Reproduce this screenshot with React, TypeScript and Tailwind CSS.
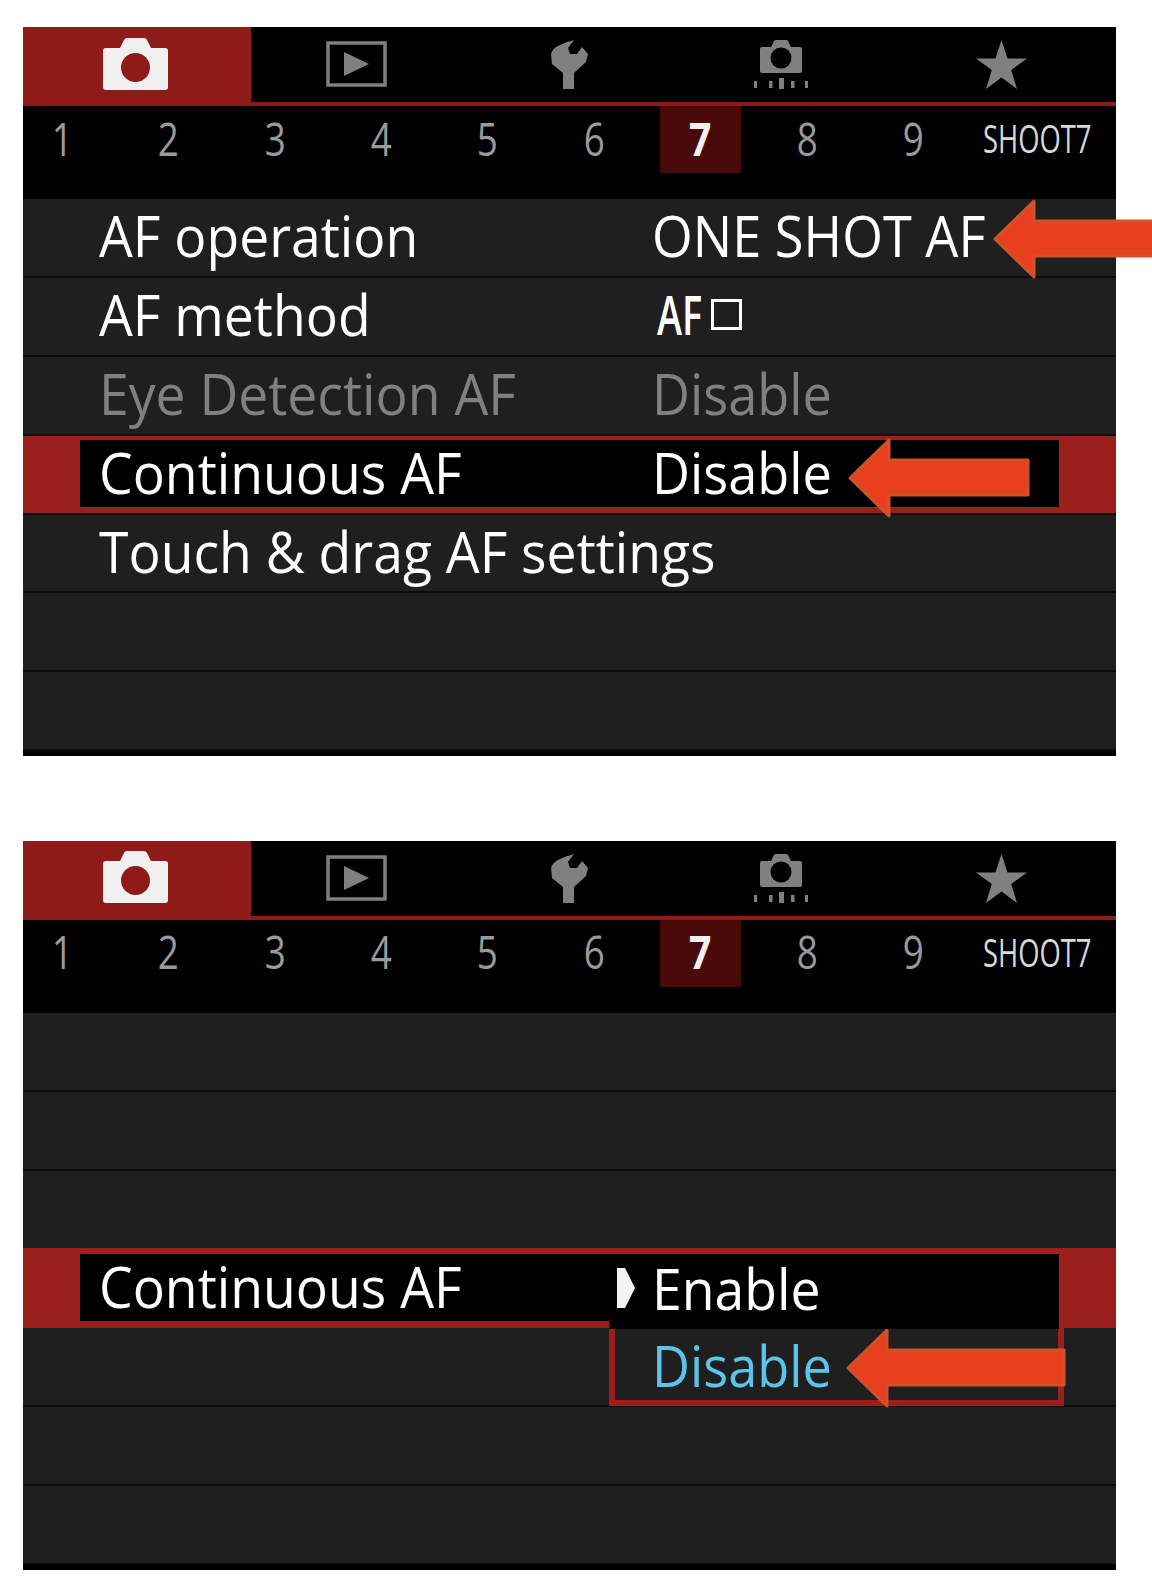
import React from "react";

const FONT = "font-['Open_Sans','Noto_Sans',sans-serif]";

function CameraIcon() {
  return (
    <svg width="65" height="52" viewBox="0 0 65 52">
      <path
        d="M3 10 H17 L21 2 Q22 0 24 0 H41 Q43 0 44 2 L48 10 H62 Q65 10 65 13 V49 Q65 52 62 52 H3 Q0 52 0 49 V13 Q0 10 3 10 Z"
        fill="#f1f0f1"
      />
      <circle cx="32.5" cy="29.500" r="14.500" fill="#8e1b17" />
    </svg>
  );
}

function PlayIcon() {
  return (
    <svg width="61" height="46" viewBox="0 0 61 46">
      <rect x="2" y="2" width="57" height="42" fill="none" stroke="#808080" strokeWidth="3.5" />
      <path d="M18 11 L43 23 L18 35 Z" fill="#808080" />
    </svg>
  );
}

function WrenchIcon() {
  return (
    <svg width="37" height="49" viewBox="0 0 37 49">
      <path
        d="M23 0 C13 3 2 6 0 14 L1 24 L12 33 V49 H23 V33 L35 22 L37 14 L31 7 L26 14 L19 14 L17 8 Z"
        fill="#808080"
      />
    </svg>
  );
}

function AfCameraIcon() {
  return (
    <svg width="54" height="49" viewBox="0 0 54 49">
      <path
        d="M8 7 H17 L20 1 Q20.500 0 22 0 H32 Q33.500 0 34 1 L37 7 H46 Q48 7 48 9 V31 Q48 33 46 33 H8 Q6 33 6 31 V9 Q6 7 8 7 Z"
        fill="#808080"
      />
      <circle cx="27" cy="18" r="10.500" fill="#000" />
      <circle cx="27" cy="18" r="3" fill="#000" />
      <rect x="0" y="41" width="3" height="7" fill="#808080" />
      <rect x="15" y="41" width="3.500" height="7" fill="#808080" />
      <rect x="25" y="38" width="5" height="11" fill="#808080" />
      <rect x="37" y="41" width="3.500" height="7" fill="#808080" />
      <rect x="51" y="41" width="3" height="7" fill="#808080" />
    </svg>
  );
}

function StarIcon() {
  return (
    <svg width="51" height="49" viewBox="0 0 51 49">
      <path d="M25.500 0 L31.500 18.500 L51 18.500 L35.200 30 L41 49 L25.500 37.500 L10 49 L15.800 30 L0 18.500 L19.500 18.500 Z" fill="#808080" />
    </svg>
  );
}

function Arrow({ className, width, shaftEnd }: { className: string; width: number; shaftEnd: number }) {
  // head is 40 wide and 78 tall, the shaft 35 tall
  return (
    <svg className={className} width={width} height="80" viewBox={`0 0 ${width} 80`}>
      <path
        d={`M2 40 L41 2 V22 H${shaftEnd} V57 H41 V78 Z`}
        fill="#e8401f"
        stroke="#d0522a"
        strokeWidth="3"
        strokeLinejoin="round"
      />
    </svg>
  );
}

function Squeezed({ children, className = "" }: { children: React.ReactNode; className?: string }) {
  return <span className={`inline-block origin-left whitespace-nowrap scale-x-[0.955] ${className}`}>{children}</span>;
}

function Value({ children, className = "" }: { children: React.ReactNode; className?: string }) {
  return <span className={`inline-block origin-left whitespace-nowrap scale-x-[0.935] ${className}`}>{children}</span>;
}

function Header() {
  const nums = ["1", "2", "3", "4", "5", "6", "7", "8", "9"];
  return (
    <>
      <div className="flex h-[79px] border-b-[4px] border-[#8e1b17] bg-black">
        <div className="flex w-[228px] items-center justify-center bg-[#8e1b17] pr-[3px] pb-[2px]">
          <CameraIcon />
        </div>
        <div className="flex w-[210px] items-center justify-center pb-[1px]">
          <PlayIcon />
        </div>
        <div className="flex w-[218px] items-center justify-center pr-[1px]">
          <WrenchIcon />
        </div>
        <div className="flex w-[204px] items-center justify-center">
          <AfCameraIcon />
        </div>
        <div className="flex w-[233px] items-center justify-center pl-[4px]">
          <StarIcon />
        </div>
      </div>
      <div className="flex h-[93px] items-start gap-[30.4px] bg-black pl-px">
        {nums.map((n) =>
          n === "7" ? (
            <div
              key={n}
              className="-mx-[2.5px] flex h-[67px] w-[81px] shrink-0 items-center justify-center bg-[#4a0a0a] pb-[4px] text-[46px] leading-none font-bold text-[#f1efef]"
            >
              <span className="inline-block scale-x-[0.85]">{n}</span>
            </div>
          ) : (
            <div
              key={n}
              className="flex h-[67px] w-[76px] shrink-0 items-center justify-center pb-[4px] text-[46px] leading-none font-medium text-[#9a9a9a]"
            >
              <span className="inline-block scale-x-[0.8]">{n}</span>
            </div>
          ),
        )}
        <div className="ml-[1px] flex h-[64px] shrink-0 items-center text-[38px] leading-none text-[#d8d8d8]">
          <span className="inline-block origin-left scale-x-[0.72] whitespace-nowrap">SHOOT7</span>
        </div>
      </div>
    </>
  );
}

function Row({ label, value, dim, children }: { label?: string; value?: React.ReactNode; dim?: boolean; children?: React.ReactNode }) {
  const color = dim ? "text-[#808080]" : "text-white";
  return (
    <div className={`relative flex h-[78.9px] items-center border-b-[2.5px] border-[#0c0c0c] bg-[#1f1f1f] pb-[4px] pl-[76px] text-[56px] leading-none ${color}`}>
      {label && (
        <div className="w-[553px] shrink-0">
          <Squeezed>{label}</Squeezed>
        </div>
      )}
      {value}
      {children}
    </div>
  );
}

function FirstPanel() {
  return (
    <div className="relative bg-black">
      <Header />
      <Row label="AF operation" value={<Value>ONE SHOT AF</Value>} />
      <Row
        label="AF method"
        value={
          <div className="flex items-center pl-[5px]">
            <span className="inline-block w-[54px] origin-left scale-x-[0.7] text-[54px] font-semibold">AF</span>
            <div className="h-[31px] w-[31px] border-[3.5px] border-white" />
          </div>
        }
      />
      <Row label="Eye Detection AF" value={<Value>Disable</Value>} dim />
      <div className="-mt-[1.5px] flex h-[80.4px] border-b-[2px] border-[#0c0c0c] bg-[#9b1f1a] px-[57px] pt-[6px] pb-[5.5px] text-[56px] leading-none text-white">
        <div className="flex flex-1 items-center bg-black pb-[4px] pl-[19px]">
          <div className="w-[553px] shrink-0">
            <Squeezed>Continuous AF</Squeezed>
          </div>
          <Value>Disable</Value>
        </div>
      </div>
      <Row label="Touch & drag AF settings" />
      <Row />
      <Row />
      <div className="h-[4.7px]" />
      <Arrow className="absolute top-[172px] left-[970px]" width={159} shaftEnd={170} />
      <Arrow className="absolute top-[411px] left-[825px]" width={182} shaftEnd={180} />
    </div>
  );
}

function SecondPanel() {
  return (
    <div className="relative bg-black">
      <Header />
      <Row />
      <Row />
      <Row />
      <div className="relative -mt-[1.5px] flex h-[80.4px] border-b-[2px] border-[#9b1f1a] bg-[#9b1f1a] pt-[6px] pl-[57px] text-[56px] leading-none text-white">
        <div className="flex h-[67px] w-[529px] items-center bg-black pb-[4px] pl-[19px]">
          <Squeezed>Continuous AF</Squeezed>
        </div>
        <div className="absolute top-[6px] left-[586px] z-10 flex h-[75px] w-[450px] items-center bg-black pb-[8px] pl-[8px]">
          <svg width="18" height="40" viewBox="0 0 18 40" className="mr-[17px]">
            <path d="M0 0 H8 L18 20 L8 40 H0 Z" fill="#f4f4f4" />
          </svg>
          <Squeezed>Enable</Squeezed>
        </div>
      </div>
      <Row
        value={
          <div className="pl-[553px]">
            <Value className="text-[#5cc4e8]">Disable</Value>
          </div>
        }
      >
        <div className="absolute top-[-7.5px] left-[586px] h-[85px] w-[455px] border-x-[6px] border-b-[6px] border-[#9b1f1a]" />
      </Row>
      <Row />
      <Row />
      <div className="h-[4.7px]" />
      <Arrow className="absolute top-[487px] left-[823px]" width={220} shaftEnd={218} />
    </div>
  );
}

export default function App() {
  return (
    <div className={`flex h-[1586px] flex-col gap-[85px] overflow-hidden bg-white pt-[27px] pr-[36px] pl-[23px] ${FONT}`}>
      <FirstPanel />
      <SecondPanel />
    </div>
  );
}
